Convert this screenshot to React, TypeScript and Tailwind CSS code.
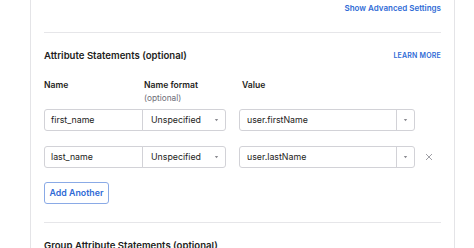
import React from "react";

const Caret = () => (
  <svg width="5" height="4" viewBox="0 0 5 4" className="shrink-0">
    <path d="M0.8 1 L4.2 1 L2.5 3.2 Z" fill="#8a8a90" />
  </svg>
);

export default function App() {
  return (
    <div className="w-[474px] h-[248px] overflow-hidden bg-white" style={{ fontFamily: "Inter, 'Liberation Sans', sans-serif" }}>
      <div className="ml-[30px] w-[425px] border-x border-[#e4e4e7] px-[13px] h-[270px] text-[#1d1d21]">
        <div className="h-[15px] flex justify-end items-center">
          <span className="text-[8px] font-semibold text-[#2f6bd6] whitespace-nowrap">Show Advanced Settings</span>
        </div>
        <div className="mt-[17px] border-t border-[#e6e6e9]" />
        <div className="mt-[15px] h-[16px] flex justify-between items-center">
          <span className="text-[9.6px] font-semibold whitespace-nowrap">Attribute Statements (optional)</span>
          <span className="text-[7px] font-semibold text-[#2f6bd6] tracking-[0.2px] whitespace-nowrap">LEARN MORE</span>
        </div>
        <div className="mt-[15px] flex text-[8.6px] font-semibold">
          <div className="w-[100px] leading-[12px]">Name</div>
          <div className="w-[98px] leading-[12px]">
            <div>Name format</div>
            <div className="mt-[1px] font-normal text-[#6e6e78] text-[8.3px]">(optional)</div>
          </div>
          <div className="leading-[12px]">Value</div>
        </div>
        <div className="mt-[5px] flex flex-col gap-[15px] text-[8.8px]">
          {[
            ["first_name", "user.firstName", false],
            ["last_name", "user.lastName", true],
          ].map(([name, value, x], i) => (
            <div key={i} className="flex items-center h-[22px]">
              <div className="w-[99px] h-[22px] border border-[#d2d2d7] rounded-l-[3px] flex items-center pl-[6px] whitespace-nowrap">{name as string}</div>
              <div className="-ml-px w-[84px] h-[22px] border border-[#d2d2d7] rounded-r-[3px] flex items-center justify-between pl-[8px] pr-[6px] whitespace-nowrap">
                <span>Unspecified</span>
                <Caret />
              </div>
              <div className="ml-[13px] w-[176px] h-[22px] border border-[#d2d2d7] rounded-[3px] flex items-stretch">
                <div className="flex-1 flex items-center pl-[7px] whitespace-nowrap">{value as string}</div>
                <div className="w-[18px] border-l border-[#d2d2d7] flex items-center justify-center">
                  <Caret />
                </div>
              </div>
              {x ? (
                <svg width="8" height="8" viewBox="0 0 8 8" className="ml-[10px]">
                  <path d="M1 1 L7 7 M7 1 L1 7" stroke="#a0a0a6" strokeWidth="1" />
                </svg>
              ) : null}
            </div>
          ))}
        </div>
        <button className="mt-[14px] h-[22px] w-[65px] border border-[#8aaae6] rounded-[3px] text-[8.8px] font-semibold text-[#2f6bd6] flex items-center justify-center whitespace-nowrap">
          Add Another
        </button>
        <div className="mt-[18px] border-t border-[#e6e6e9]" />
        <div className="mt-[15px] h-[16px] flex items-center">
          <span className="text-[9.6px] font-semibold whitespace-nowrap">Group Attribute Statements (optional)</span>
        </div>
      </div>
    </div>
  );
}
